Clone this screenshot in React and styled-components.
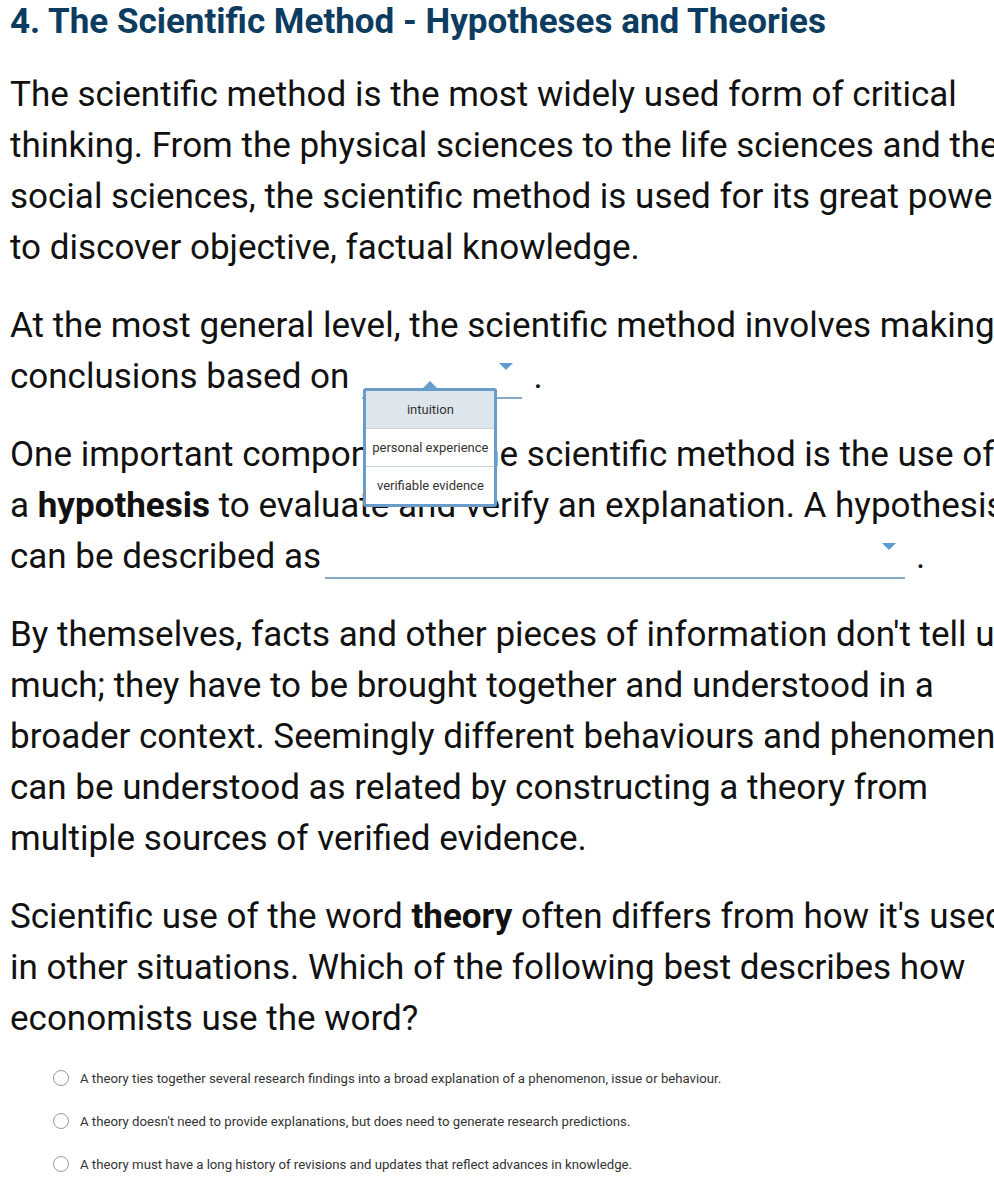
import styled, { createGlobalStyle } from "styled-components";

const GlobalStyle = createGlobalStyle`
  html, body {
    margin: 0;
    padding: 0;
    background: #fff;
    overflow-x: hidden;
  }
  body {
    font-family: Roboto, "Noto Sans", sans-serif;
    color: #111;
  }
`;

const options = ["intuition", "personal experience", "verifiable evidence"];

const answers = [
  "A theory ties together several research findings into a broad explanation of a phenomenon, issue or behaviour.",
  "A theory doesn't need to provide explanations, but does need to generate research predictions.",
  "A theory must have a long history of revisions and updates that reflect advances in knowledge.",
];

function App() {
  return (
    <>
      <GlobalStyle />
      <Page>
        <Title>4. The Scientific Method - Hypotheses and Theories</Title>
        <Para>
          The scientific method is the most widely used form of critical
          thinking. From the physical sciences to the life sciences and the
          social sciences, the scientific method is used for its great power
          to discover objective, factual knowledge.
        </Para>
        <Para>
          At the most general level, the scientific method involves making
          conclusions based on
          <Select $width={160} $left={13}>
            <Arrow />
            <Listbox>
              {options.map((o, i) => (
                <Option key={o} $active={i === 0}>
                  {o}
                </Option>
              ))}
            </Listbox>
          </Select>
          .
        </Para>
        <Para>
          One important component of the scientific method is the use of a{" "}
          <b>hypothesis</b> to evaluate and verify an explanation. A hypothesis
          can be described as
          <Select $width={580} $left={4}>
            <Arrow />
          </Select>
          .
        </Para>
        <Para>
          By themselves, facts and other pieces of information don't tell us
          much; they have to be brought together and understood in a broader
          context. Seemingly different behaviours and phenomena can be
          understood as related by constructing a theory from multiple sources
          of verified evidence.
        </Para>
        <Para>
          Scientific use of the word <b>theory</b> often differs from how it's
          used in other situations. Which of the following best describes how
          economists use the word?
        </Para>
        <Choices>
          {answers.map((a) => (
            <Choice key={a}>
              <Radio />
              <span>{a}</span>
            </Choice>
          ))}
        </Choices>
      </Page>
    </>
  );
}

const Page = styled.div`
  width: 1006px;
  padding: 2px 0 0 10px;
`;

const Title = styled.h1`
  margin: 0;
  font-size: 35px;
  line-height: 40px;
  font-weight: 700;
  color: #0d3c61;
`;

const Para = styled.p`
  margin: 27px 0 0;
  font-size: 35px;
  line-height: 51px;
  color: #111;

  b {
    font-weight: 700;
  }
`;

const Select = styled.span`
  position: relative;
  display: inline-block;
  vertical-align: -11px;
  margin: 0 11px 0 ${(p) => p.$left}px;
  width: ${(p) => p.$width}px;
  height: 34px;
  border-bottom: 2px solid #86a9c9;
`;

const Arrow = styled.span`
  position: absolute;
  right: 9px;
  top: 0;
  width: 0;
  height: 0;
  border-left: 7px solid transparent;
  border-right: 7px solid transparent;
  border-top: 7px solid #5c9ad2;
`;

const Listbox = styled.div`
  position: absolute;
  left: 1px;
  top: 25px;
  width: 128px;
  background: #fff;
  border: 3px solid #6a9cc9;
  border-radius: 3px;
  z-index: 2;

  &::before {
    content: "";
    position: absolute;
    left: 57px;
    top: -10px;
    border-left: 7px solid transparent;
    border-right: 7px solid transparent;
    border-bottom: 7px solid #6a9cc9;
  }
`;

const Option = styled.div`
  height: 37px;
  display: flex;
  align-items: center;
  justify-content: center;
  font-size: 13px;
  line-height: 1;
  color: #333;
  white-space: nowrap;
  background: ${(p) => (p.$active ? "#dde6ec" : "#fff")};
  border-top: 1px solid #c9d3da;

  &:first-child {
    border-top: none;
  }
`;

const Choices = styled.div`
  margin-top: 25px;
  padding-left: 43px;
  display: flex;
  flex-direction: column;
  gap: 25px;
`;

const Choice = styled.label`
  display: flex;
  align-items: center;
  gap: 11px;
  height: 18px;
  font-size: 13.2px;
  color: #333;
`;

const Radio = styled.span`
  width: 14px;
  height: 14px;
  border: 1.5px solid #9a9a9a;
  border-radius: 50%;
  flex: none;
`;

export default App;
